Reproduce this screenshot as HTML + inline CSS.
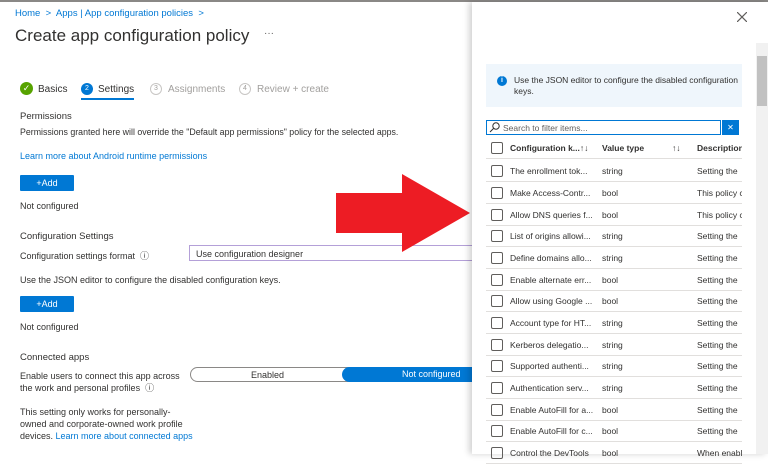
<!DOCTYPE html>
<html><head><style>
*{margin:0;padding:0;box-sizing:border-box}
body{width:768px;height:454px;overflow:hidden;background:#fff;font-family:"Liberation Sans",sans-serif;color:#323130;position:relative;font-size:9px}
.a{position:absolute;white-space:nowrap}
.link{color:#0078d4}
.btn{position:absolute;background:#0078d4;color:#fff;font-size:9px;text-align:center;line-height:16px;width:54px;height:16px;border-radius:1px}
.g{color:#a19f9d}
.row{position:absolute;left:486px;width:256px;height:22px;border-bottom:1px solid #e1dfdd;font-size:8.5px;color:#323130;overflow:hidden;white-space:nowrap}
.row span{position:absolute;top:6px}
.cb{position:absolute;left:5px;top:5px;width:12px;height:12px;border:1px solid #605e5c;border-radius:2px}
</style></head><body>
<div class="a" style="left:0;top:0;width:768px;height:2px;background:#8a8886"></div>
<div class="a link" style="left:15px;top:8px;font-size:9.5px">Home &nbsp;&gt;&nbsp; Apps | App configuration policies &nbsp;&gt;</div>
<div class="a" style="left:15px;top:26px;font-size:17px;color:#323130">Create app configuration policy</div>
<div class="a" style="left:264px;top:28px;font-size:10px;color:#605e5c">···</div>

<div class="a" style="left:20px;top:82px;width:13px;height:13px;border-radius:50%;background:#57a300;color:#fff;font-size:9px;text-align:center;line-height:13px">✓</div>
<div class="a" style="left:38px;top:84px;font-size:10px">Basics</div>
<div class="a" style="left:81px;top:83px;width:12px;height:12px;border-radius:50%;background:#0078d4;color:#fff;font-size:7px;text-align:center;line-height:12px">2</div>
<div class="a" style="left:98px;top:84px;font-size:10px">Settings</div>
<div class="a" style="left:81px;top:98px;width:53px;height:2px;background:#0078d4"></div>
<div class="a g" style="left:150px;top:83px;width:12px;height:12px;border-radius:50%;border:1px solid #c8c6c4;font-size:7px;text-align:center;line-height:10px">3</div>
<div class="a g" style="left:168px;top:84px;font-size:10px">Assignments</div>
<div class="a g" style="left:239px;top:83px;width:12px;height:12px;border-radius:50%;border:1px solid #c8c6c4;font-size:7px;text-align:center;line-height:10px">4</div>
<div class="a g" style="left:257px;top:84px;font-size:10px">Review + create</div>

<div class="a" style="left:20px;top:111px;font-size:9.5px">Permissions</div>
<div class="a" style="left:20px;top:127px;font-size:8.8px">Permissions granted here will override the "Default app permissions" policy for the selected apps.</div>
<div class="a link" style="left:20px;top:151px">Learn more about Android runtime permissions</div>
<div class="btn" style="left:20px;top:175px">+Add</div>
<div class="a" style="left:20px;top:201px">Not configured</div>
<div class="a" style="left:20px;top:231px;font-size:9.5px">Configuration Settings</div>
<div class="a" style="left:20px;top:249px">Configuration settings format &nbsp;ⓘ</div>
<div class="a" style="left:189px;top:245px;width:290px;height:16px;border:1px solid #b4a0d8;border-right:none;padding:3px 6px">Use configuration designer</div>
<div class="a" style="left:20px;top:275px">Use the JSON editor to configure the disabled configuration keys.</div>
<div class="btn" style="left:20px;top:296px">+Add</div>
<div class="a" style="left:20px;top:322px">Not configured</div>
<div class="a" style="left:20px;top:352px;font-size:9.5px">Connected apps</div>
<div class="a" style="left:20px;top:370px;line-height:12px">Enable users to connect this app across<br>the work and personal profiles &nbsp;ⓘ</div>
<div class="a" style="left:190px;top:367px;width:290px;height:15px;border:1px solid #8a8886;border-radius:8px"></div>
<div class="a" style="left:251px;top:370px">Enabled</div>
<div class="a" style="left:342px;top:367px;width:140px;height:15px;background:#0078d4;border-radius:8px 0 0 8px;color:#fff;padding-left:60px;line-height:15px">Not configured</div>
<div class="a" style="left:20px;top:406px;line-height:12px">This setting only works for personally-<br>owned and corporate-owned work profile<br>devices. <span class="link">Learn more about connected apps</span></div>

<svg class="a" style="left:336px;top:174px" width="136" height="80"><polygon points="0,19 66,19 66,0 134,39 66,78 66,59 0,59" fill="#ed1c24"/></svg>

<div class="a" style="left:472px;top:2px;width:296px;height:452px;background:#fff;box-shadow:-3px 0 6px rgba(0,0,0,.18)"></div>
<svg class="a" style="left:737px;top:12px" width="10" height="10"><path d="M0,0L10,10M10,0L0,10" stroke="#605e5c" stroke-width="1.2"/></svg>
<div class="a" style="left:756px;top:43px;width:12px;height:411px;background:#f1f1f1"></div>
<div class="a" style="left:757px;top:56px;width:10px;height:50px;background:#c1c1c1"></div>
<div class="a" style="left:486px;top:64px;width:256px;height:43px;background:#eff6fc"></div>
<div class="a" style="left:497px;top:76px;width:10px;height:10px;border-radius:50%;background:#0078d4;color:#fff;font-size:7px;text-align:center;line-height:10px;font-weight:bold">i</div>
<div class="a" style="left:514px;top:75px;font-size:8.5px;line-height:11px">Use the JSON editor to configure the disabled configuration<br>keys.</div>
<div class="a" style="left:486px;top:120px;width:235px;height:15px;border:1px solid #0078d4;padding:2px 0 0 16px;font-size:8.5px;color:#605e5c">Search to filter items...</div>
<svg class="a" style="left:489px;top:122px" width="11" height="11"><circle cx="7" cy="4" r="3.2" fill="none" stroke="#323130" stroke-width="1"/><path d="M4.6,6.4L1,10" stroke="#323130" stroke-width="1"/></svg>
<div class="a" style="left:722px;top:120px;width:17px;height:15px;background:#0078d4;color:#fff;font-size:8px;text-align:center;line-height:15px">✕</div>
<div class="row" style="top:137px;font-weight:bold;color:#323130"><div class="cb"></div><span style="left:24px">Configuration k...↑↓</span><span style="left:116px">Value type</span><span style="left:186px;font-weight:normal">↑↓</span><span style="left:211px">Description</span></div>
<div class="row" style="top:160px"><div class="cb"></div><span style="left:24px">The enrollment tok...</span><span style="left:116px">string</span><span style="left:211px">Setting the</span></div>
<div class="row" style="top:182px"><div class="cb"></div><span style="left:24px">Make Access-Contr...</span><span style="left:116px">bool</span><span style="left:211px">This policy c</span></div>
<div class="row" style="top:204px"><div class="cb"></div><span style="left:24px">Allow DNS queries f...</span><span style="left:116px">bool</span><span style="left:211px">This policy c</span></div>
<div class="row" style="top:225px"><div class="cb"></div><span style="left:24px">List of origins allowi...</span><span style="left:116px">string</span><span style="left:211px">Setting the</span></div>
<div class="row" style="top:247px"><div class="cb"></div><span style="left:24px">Define domains allo...</span><span style="left:116px">string</span><span style="left:211px">Setting the</span></div>
<div class="row" style="top:269px"><div class="cb"></div><span style="left:24px">Enable alternate err...</span><span style="left:116px">bool</span><span style="left:211px">Setting the</span></div>
<div class="row" style="top:290px"><div class="cb"></div><span style="left:24px">Allow using Google ...</span><span style="left:116px">bool</span><span style="left:211px">Setting the</span></div>
<div class="row" style="top:312px"><div class="cb"></div><span style="left:24px">Account type for HT...</span><span style="left:116px">string</span><span style="left:211px">Setting the</span></div>
<div class="row" style="top:334px"><div class="cb"></div><span style="left:24px">Kerberos delegatio...</span><span style="left:116px">string</span><span style="left:211px">Setting the</span></div>
<div class="row" style="top:355px"><div class="cb"></div><span style="left:24px">Supported authenti...</span><span style="left:116px">string</span><span style="left:211px">Setting the</span></div>
<div class="row" style="top:377px"><div class="cb"></div><span style="left:24px">Authentication serv...</span><span style="left:116px">string</span><span style="left:211px">Setting the</span></div>
<div class="row" style="top:399px"><div class="cb"></div><span style="left:24px">Enable AutoFill for a...</span><span style="left:116px">bool</span><span style="left:211px">Setting the</span></div>
<div class="row" style="top:420px"><div class="cb"></div><span style="left:24px">Enable AutoFill for c...</span><span style="left:116px">bool</span><span style="left:211px">Setting the</span></div>
<div class="row" style="top:442px"><div class="cb"></div><span style="left:24px">Control the DevTools</span><span style="left:116px">bool</span><span style="left:211px">When enabl</span></div>
</body></html>
